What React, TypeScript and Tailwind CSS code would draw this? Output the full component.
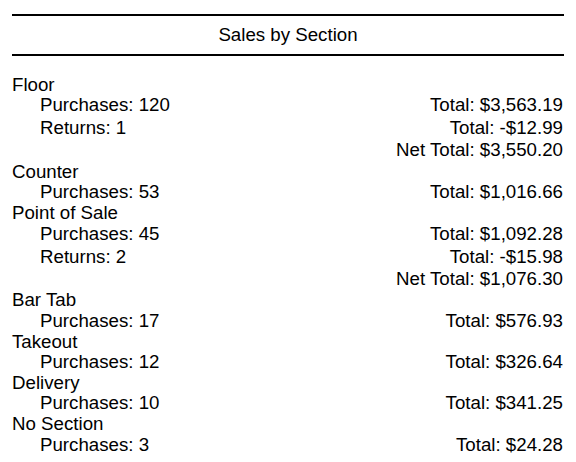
type Line = { label: string; total: string }
type Section = { name: string; lines: Line[]; net?: string }

const sections: Section[] = [
  {
    name: 'Floor',
    lines: [
      { label: 'Purchases: 120', total: 'Total: $3,563.19' },
      { label: 'Returns: 1', total: 'Total: -$12.99' },
    ],
    net: 'Net Total: $3,550.20',
  },
  {
    name: 'Counter',
    lines: [{ label: 'Purchases: 53', total: 'Total: $1,016.66' }],
  },
  {
    name: 'Point of Sale',
    lines: [
      { label: 'Purchases: 45', total: 'Total: $1,092.28' },
      { label: 'Returns: 2', total: 'Total: -$15.98' },
    ],
    net: 'Net Total: $1,076.30',
  },
  {
    name: 'Bar Tab',
    lines: [{ label: 'Purchases: 17', total: 'Total: $576.93' }],
  },
  {
    name: 'Takeout',
    lines: [{ label: 'Purchases: 12', total: 'Total: $326.64' }],
  },
  {
    name: 'Delivery',
    lines: [{ label: 'Purchases: 10', total: 'Total: $341.25' }],
  },
  {
    name: 'No Section',
    lines: [{ label: 'Purchases: 3', total: 'Total: $24.28' }],
  },
]

export default function App() {
  return (
    <div className="min-h-[462px] w-[576px] bg-white px-3 pt-[14px] font-['Liberation_Sans',Arial,sans-serif] text-[18.7px] text-black">
      <div className="flex h-[42px] items-center justify-center border-y-2 border-black">
        Sales by Section
      </div>
      <div className="mt-[18.5px] pr-[1px] leading-[20.6px]">
        {sections.map((section, s) => (
          <div key={section.name} className={s > 0 && sections[s - 1].net ? 'mt-[1px]' : ''}>
            <div>{section.name}</div>
            {section.lines.map((line, i) => (
              <div
                key={line.label}
                className={i > 0 ? 'mt-[2.5px] flex justify-between pl-[28px]' : 'flex justify-between pl-[28px]'}
              >
                <span>{line.label}</span>
                <span>{line.total}</span>
              </div>
            ))}
            {section.net && <div className="mt-[1.5px] text-right">{section.net}</div>}
          </div>
        ))}
      </div>
    </div>
  )
}
